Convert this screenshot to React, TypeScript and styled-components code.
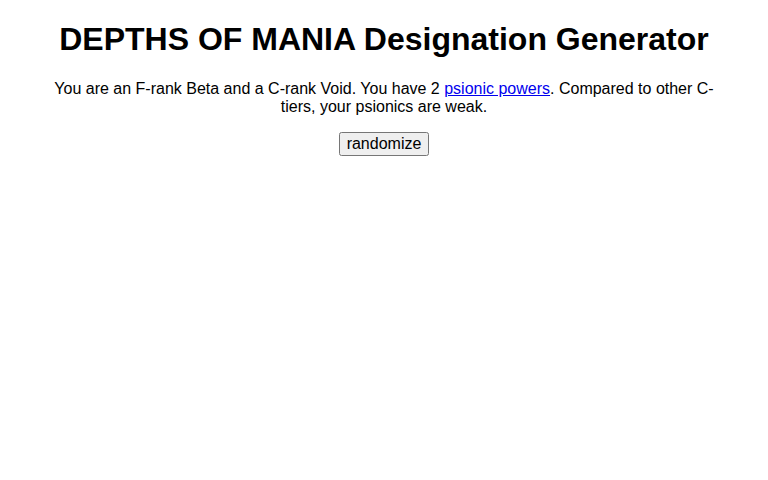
import React from "react";
import styled, { createGlobalStyle } from "styled-components";

const Global = createGlobalStyle`
  body {
    margin: 0 8px;
    font-family: "Liberation Sans", Arial, sans-serif;
    background: #fff;
    color: #000;
  }
`;

const Page = styled.main`
  display: flex;
  flex-direction: column;
  align-items: center;
  text-align: center;
`;

const Title = styled.h1`
  font-size: 32px;
  font-weight: bold;
  margin: 21px 0 22px;
`;

const Text = styled.p`
  font-size: 16px;
  max-width: 680px;
  margin: 0 0 16px;
`;

const Link = styled.a`
  color: #0000ee;
  text-decoration: underline;
`;

const Button = styled.button`
  font-family: "Liberation Sans", Arial, sans-serif;
  font-size: 16px;
`;

export default function App() {
  return (
    <>
      <Global />
      <Page>
        <Title>DEPTHS OF MANIA Designation Generator</Title>
        <Text>
          You are an F-rank Beta and a C-rank Void. You have 2{" "}
          <Link href="#">psionic powers</Link>. Compared to other C-tiers, your psionics are weak.
        </Text>
        <Button>randomize</Button>
      </Page>
    </>
  );
}
